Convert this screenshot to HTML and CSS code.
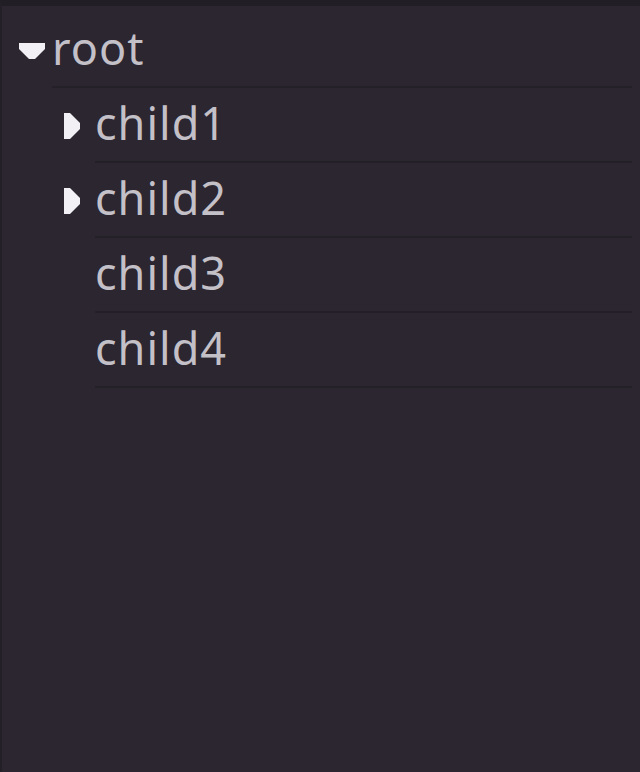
FILE: index.html
```html
<!DOCTYPE html>
<html lang="en">
<head>
    <meta charset="UTF-8">
    <title>Tree</title>
    <link rel="stylesheet" href="styles.css">
</head>
<body>
    <div class="panel">
        <ul class="tree">
            <li class="item">
                <div class="row">
                    <span class="arrow">
                        <svg width="28" height="20" viewBox="0 0 28 20"><path d="M1 2 H27 V8 L17 18 H11 L1 8 Z" fill="#f2f0f4"/></svg>
                    </span>
                    <span class="label">root</span>
                </div>
                <ul class="tree children">
                    <li class="item">
                        <div class="row">
                            <span class="arrow">
                                <svg width="20" height="28" viewBox="0 0 20 28"><path d="M2 1 H8 L18 11 V17 L8 27 H2 Z" fill="#f2f0f4"/></svg>
                            </span>
                            <span class="label">child1</span>
                        </div>
                    </li>
                    <li class="item">
                        <div class="row">
                            <span class="arrow">
                                <svg width="20" height="28" viewBox="0 0 20 28"><path d="M2 1 H8 L18 11 V17 L8 27 H2 Z" fill="#f2f0f4"/></svg>
                            </span>
                            <span class="label">child2</span>
                        </div>
                    </li>
                    <li class="item">
                        <div class="row">
                            <span class="arrow"></span>
                            <span class="label">child3</span>
                        </div>
                    </li>
                    <li class="item">
                        <div class="row">
                            <span class="arrow"></span>
                            <span class="label">child4</span>
                        </div>
                    </li>
                </ul>
            </li>
        </ul>
    </div>
</body>
</html>
```

FILE: styles.css
```css
* {
    margin: 0;
    padding: 0;
    box-sizing: border-box;
}

body {
    width: 640px;
    height: 772px;
    background: #2b2630;
    font-family: "Noto Sans", "DejaVu Sans", sans-serif;
    overflow: hidden;
}

.panel {
    height: 100%;
    border-top: 6px solid #221e26;
    border-left: 2px solid #232027;
    padding-top: 7px;
    padding-right: 8px;
}

.tree {
    list-style: none;
}

.row {
    display: flex;
    align-items: stretch;
    height: 75px;
}

.arrow {
    width: 50px;
    flex-shrink: 0;
    display: flex;
    align-items: center;
    padding-left: 16px;
}

.label {
    flex: 1;
    font-size: 45px;
    line-height: 69px;
    letter-spacing: 1px;
    color: #c4c0c8;
    border-bottom: 2px solid #242028;
}

.children {
    padding-left: 44px;
}

.children .arrow {
    width: 49px;
}
```
